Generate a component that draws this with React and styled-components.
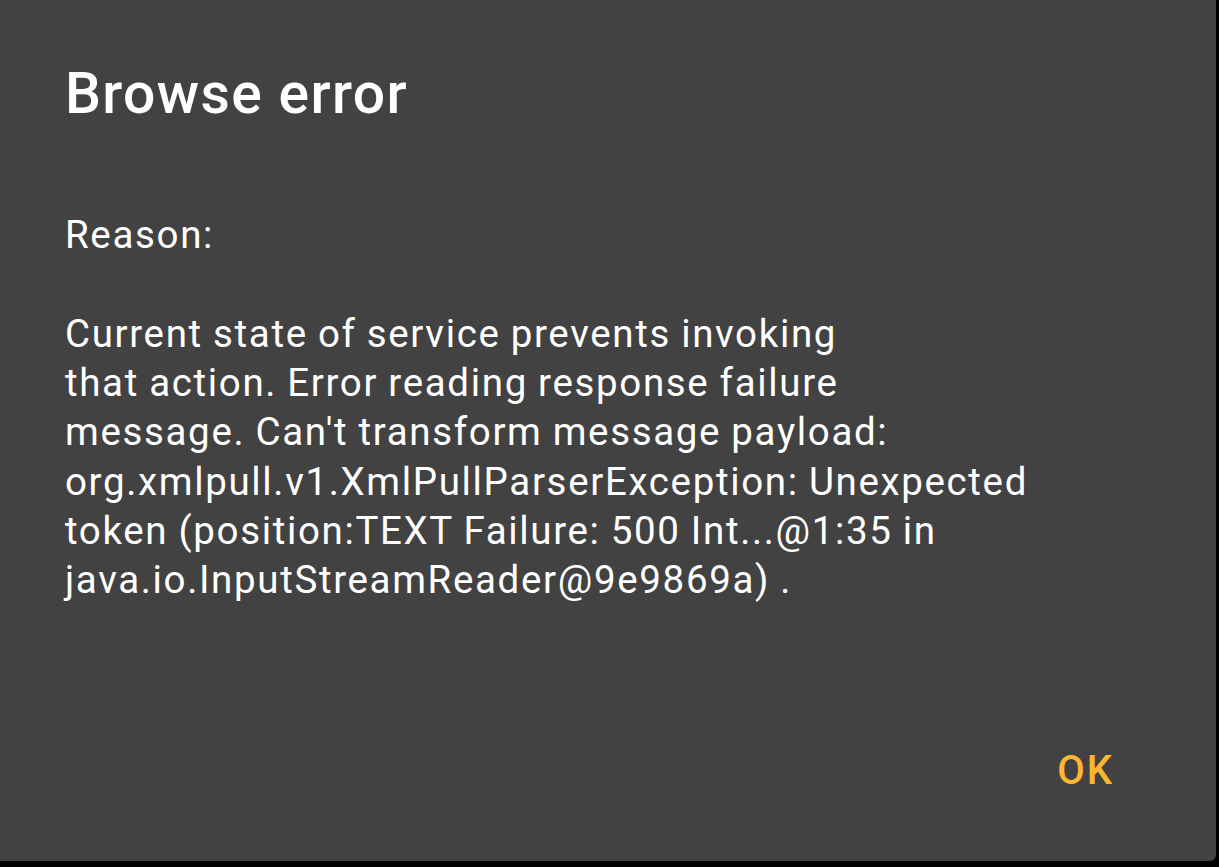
import styled, { createGlobalStyle } from 'styled-components';

const GlobalStyle = createGlobalStyle`
  html, body {
    margin: 0;
    padding: 0;
    background: #000000;
  }
  body {
    font-family: Roboto, "Noto Sans", sans-serif;
  }
`;

const messageLines = [
  'Current state of service prevents invoking',
  'that action. Error reading response failure',
  "message. Can't transform message payload:",
  'org.xmlpull.v1.XmlPullParserException: Unexpected',
  'token (position:TEXT Failure: 500 Int...@1:35 in',
  'java.io.InputStreamReader@9e9869a) .',
];

function App () {
  return (
    <>
      <GlobalStyle />
      <Dialog>
        <Title>Browse error</Title>
        <Body>
          <Paragraph>Reason:</Paragraph>
          <Paragraph>
            {messageLines.map((line) => (
              <Line key={line}>{line}</Line>
            ))}
          </Paragraph>
        </Body>
        <Actions>
          <ActionButton>OK</ActionButton>
        </Actions>
      </Dialog>
    </>
  );
};

const Dialog = styled.div`
  display: flex;
  flex-direction: column;

  width: 1216px;
  height: 861px;
  box-sizing: border-box;
  padding: 60px 0 0 65px;

  background-color: #424242;
  border-radius: 0 0 6px 0;
`

const Title = styled.h1`
  margin: 0;

  color: #ffffff;
  font-size: 57px;
  font-weight: 500;
  line-height: normal;
  letter-spacing: 1.35px;
`

const Body = styled.div`
  display: flex;
  flex-direction: column;
  gap: 50px;
  margin-top: 82.7px;

  color: #ffffff;
  font-size: 38.5px;
  line-height: 49.2px;
  letter-spacing: 1.65px;
  word-spacing: -1px;
`

const Paragraph = styled.div`
  margin: 0;
`

const Line = styled.div`
  white-space: nowrap;
`

const Actions = styled.div`
  display: flex;
  justify-content: flex-end;
  margin-top: auto;
  padding: 0 86px 51px 0;
`

const ActionButton = styled.button`
  padding: 16px 16px;
  background: none;
  border: none;

  color: #fbb632;
  font-family: Roboto, "Noto Sans", sans-serif;
  font-size: 40px;
  font-weight: 500;
  line-height: normal;
  letter-spacing: 0.05em;
`

export default App;
